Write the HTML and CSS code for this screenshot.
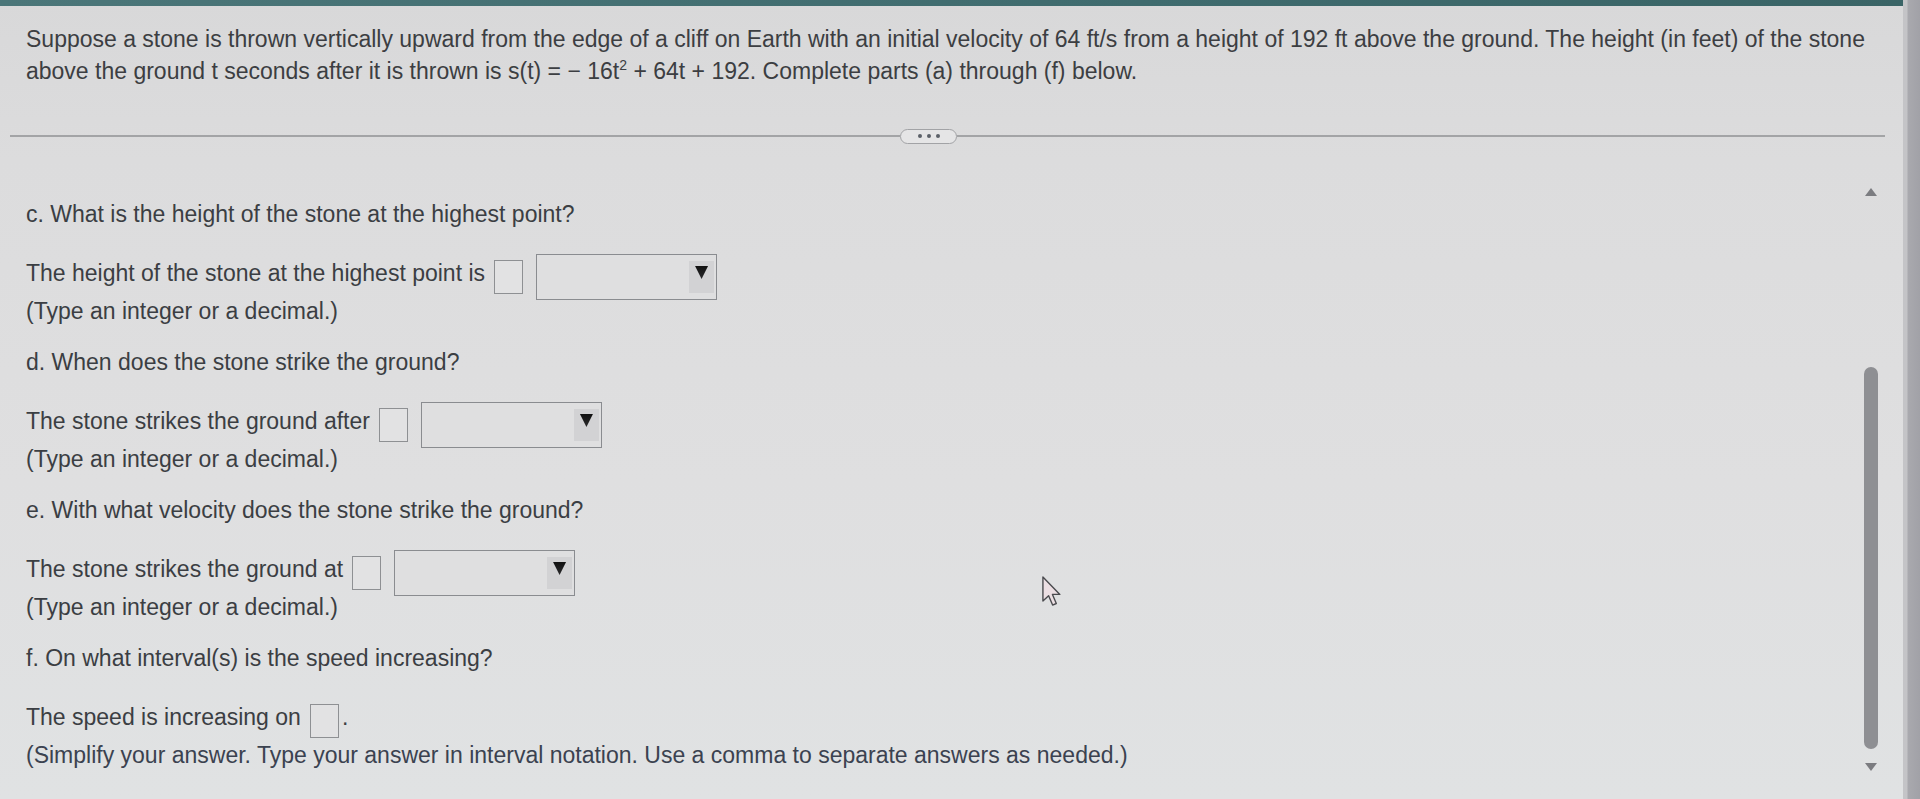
FILE: index.html
```html
<!DOCTYPE html>
<html lang="en">
<head>
<meta charset="utf-8">
<title>Stone thrown from a cliff</title>
<link rel="stylesheet" href="styles.css">
</head>
<body>
<div class="screen">
  <div class="app">
    <div class="topbar"></div>
    <div class="question">
      <span class="qline">Suppose a stone is thrown vertically upward from the edge of a cliff on Earth with an initial velocity of 64 ft/s from a height of 192 ft above the ground. The height (in feet) of the stone</span>
      <span class="qline">above the ground t seconds after it is thrown is s(t) = &#8722; 16t<sup>2</sup> + 64t + 192. Complete parts (a) through (f) below.</span>
    </div>
    <div class="divider">
      <span class="rule rule-left"></span>
      <span class="more"><i></i><i></i><i></i></span>
      <span class="rule rule-right"></span>
    </div>
    <div class="scroll">
      <div class="parts">
        <section class="part">
          <p class="prompt">c. What is the height of the stone at the highest point?</p>
          <div class="answer">
            <span class="label">The height of the stone at the highest point is</span>
            <span class="box"></span>
            <span class="select"><span class="arrow"></span></span>
          </div>
          <p class="note">(Type an integer or a decimal.)</p>
        </section>
        <section class="part">
          <p class="prompt">d. When does the stone strike the ground?</p>
          <div class="answer">
            <span class="label">The stone strikes the ground after</span>
            <span class="box"></span>
            <span class="select"><span class="arrow"></span></span>
          </div>
          <p class="note">(Type an integer or a decimal.)</p>
        </section>
        <section class="part">
          <p class="prompt">e. With what velocity does the stone strike the ground?</p>
          <div class="answer">
            <span class="label">The stone strikes the ground at</span>
            <span class="box"></span>
            <span class="select"><span class="arrow"></span></span>
          </div>
          <p class="note">(Type an integer or a decimal.)</p>
        </section>
        <section class="part">
          <p class="prompt">f. On what interval(s) is the speed increasing?</p>
          <div class="answer">
            <span class="label">The speed is increasing on</span>
            <span class="box"></span>
            <span class="period">.</span>
          </div>
          <p class="note note-blue">(Simplify your answer. Type your answer in interval notation. Use a comma to separate answers as needed.)</p>
        </section>
      </div>
      <div class="scrollbar">
        <span class="sb-up"></span>
        <span class="sb-thumb"></span>
        <span class="sb-down"></span>
      </div>
    </div>
  </div>
  <div class="bezel"></div>
</div>
<svg class="cursor" width="20" height="31" viewBox="0 0 13 20" aria-hidden="true">
  <path d="M0.6 0.6 L0.6 16.2 L4.3 12.8 L6.9 18.8 L9.3 17.8 L6.8 11.9 L11.6 11.9 Z" fill="#ecdfe3" stroke="#4a4a4e" stroke-width="0.9" stroke-linejoin="round"/>
</svg>
</body>
</html>
```

FILE: styles.css
```css
html, body {
  margin: 0;
  padding: 0;
  height: 799px;
  overflow: hidden;
}

body {
  font-family: "Liberation Sans", Arial, sans-serif;
  font-size: 23px;
  color: #3b3e43;
  background: #dcdcdd;
  position: relative;
}

.screen {
  display: flex;
  width: 1920px;
  height: 799px;
}

.app {
  width: 1903px;
  display: flex;
  flex-direction: column;
  background: linear-gradient(180deg, #d8d8d9 0%, #dcdcdd 20%, #dfdfe0 60%, #e0e2e3 100%);
}

.bezel {
  flex: 1;
  background: linear-gradient(90deg, #c4c4c7 0, #c4c4c7 4px, #a9a9ae 5px, #a1a1a7 100%);
}

.topbar {
  height: 6px;
  background: linear-gradient(90deg, #4b7679 0%, #3f6b6e 60%, #3a6466 100%);
}

.question {
  padding: 17px 13px 0 26px;
  line-height: 32px;
  color: #3c3e42;
}

.qline {
  display: block;
  white-space: nowrap;
}

.question sup {
  font-size: 14px;
  line-height: 1;
  vertical-align: 9px;
}

.divider {
  display: flex;
  align-items: center;
  height: 16px;
  margin: 41px 18px 0 10px;
}

.rule {
  height: 2px;
  background: #a3a4a6;
}

.rule-left {
  width: 890px;
}

.rule-right {
  flex: 1;
}

.more {
  width: 57px;
  height: 15px;
  box-sizing: border-box;
  border: 1.5px solid #a2a3a6;
  border-radius: 8px;
  background: #e5e5e6;
  display: flex;
  align-items: center;
  justify-content: center;
  gap: 5px;
}

.more i {
  width: 4px;
  height: 4px;
  border-radius: 50%;
  background: #5b6068;
}

.scroll {
  flex: 1;
  display: flex;
}

.parts {
  flex: 1;
  padding: 54px 0 0 26px;
}

.part + .part {
  margin-top: 22px;
}

.prompt {
  margin: 0;
  line-height: 32px;
}

.answer {
  display: flex;
  align-items: center;
  height: 46px;
  margin-top: 24px;
}

.label {
  line-height: 32px;
  margin-bottom: 8px;
}

.box {
  width: 29px;
  height: 34px;
  box-sizing: border-box;
  border: 1.5px solid #8e9093;
  background: #e2e2e3;
  margin-left: 9px;
}

.select {
  width: 181px;
  height: 46px;
  box-sizing: border-box;
  border: 1.5px solid #8a8c90;
  background: #dfdfe0;
  margin-left: 13px;
  display: flex;
  justify-content: flex-end;
  align-items: center;
  padding-right: 2px;
}

.arrow {
  width: 25px;
  height: 32px;
  background: #d2d2d4;
  position: relative;
}

.arrow::after {
  content: "";
  position: absolute;
  left: 6px;
  top: 5px;
  width: 13px;
  height: 13px;
  background: linear-gradient(180deg, #111 0%, #2a2a2c 100%);
  clip-path: polygon(0 0, 100% 0, 50% 100%);
}

.period {
  line-height: 32px;
  margin: 0 0 8px 3px;
}

.note {
  margin: -2px 0 0;
  line-height: 26px;
}

.note-blue {
  color: #3b4250;
}

.scrollbar {
  width: 42px;
  margin-right: 11px;
  display: flex;
  flex-direction: column;
  align-items: center;
  padding-top: 44px;
}

.sb-up,
.sb-down {
  width: 12px;
  height: 8px;
  background: #7b7c80;
}

.sb-up {
  clip-path: polygon(50% 0, 100% 100%, 0 100%);
}

.sb-down {
  clip-path: polygon(0 0, 100% 0, 50% 100%);
  margin-top: 14px;
}

.sb-thumb {
  width: 14px;
  height: 382px;
  border-radius: 7px;
  background: #8e8f93;
  margin-top: 171px;
}

.cursor {
  position: absolute;
  left: 1042px;
  top: 576px;
}
```
